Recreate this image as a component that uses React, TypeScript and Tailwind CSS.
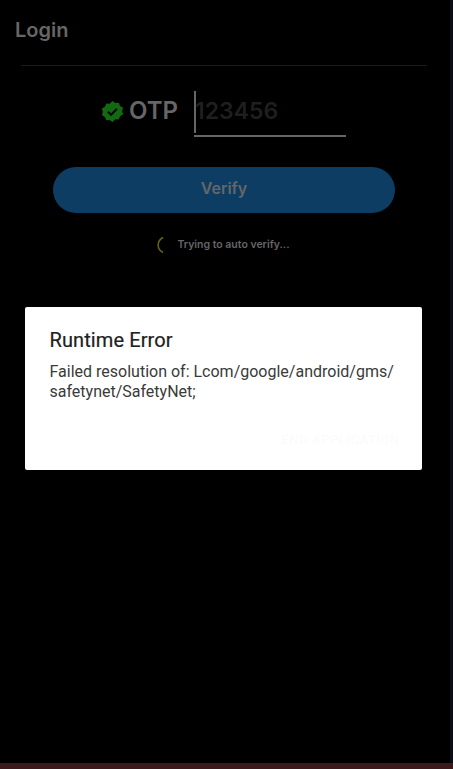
const inter = { fontFamily: '"Inter", sans-serif' };

function VerifiedBadge() {
  return (
    <svg width="23" height="23" viewBox="0 0 24 24" className="shrink-0">
      <path
        fill="#136912"
        d="M12 1l2.9 2.2 3.6-.4 1.4 3.4 3.1 1.9-.9 3.5.9 3.5-3.1 1.9-1.4 3.4-3.6-.4L12 23l-2.9-2.2-3.6.4-1.4-3.4-3.1-1.9.9-3.5-.9-3.5 3.1-1.9 1.4-3.4 3.6.4z"
      />
      <path d="M7.2 12.2l3.3 3.3 6.2-6.4" fill="none" stroke="#0a0a0a" strokeWidth="2.2" />
    </svg>
  );
}

export default function App() {
  return (
    <div className="relative flex h-[769px] w-[453px] flex-col overflow-hidden bg-black">
      <div className="flex flex-1 min-h-0">
        <main className="flex-1 min-w-0">
          <h1 className="pl-[15px] pt-[17px] text-[20px] font-semibold leading-[26px] text-[#666666]" style={inter}>
            Login
          </h1>
          <div className="ml-[21px] mr-[23px] mt-[22px] h-px bg-[#1a1a1a]" />

          {/* OTP row */}
          <div className="mt-[25px] flex items-start pl-[101px]">
            <div className="mt-[8px] flex items-center gap-[5px]">
              <VerifiedBadge />
              <span className="text-[24px] font-semibold leading-[24px] text-[#666666]" style={inter}>
                OTP
              </span>
            </div>
            <div className="ml-[16px] flex h-[46px] w-[152px] items-center border-b-2 border-[#666666] pb-[3px]">
              <div className="h-[42px] w-[2px] bg-[#666666]" />
              <span className="-ml-[1px] text-[23px] font-semibold leading-none text-[#1f1f1f]" style={inter}>
                123456
              </span>
            </div>
          </div>

          <button className="mx-[53px] mt-[30px] flex h-[46px] w-[342px] items-center justify-center rounded-[23px] bg-[#0d3d63] pb-[5px] text-[16px] font-semibold text-[#666666]" style={inter}>
            Verify
          </button>

          <div className="mt-[23px] flex items-center justify-center gap-[11px] pr-[4px]">
            <svg width="10" height="18" viewBox="0 0 10 18" className="shrink-0">
              <path d="M7 1.500 C0.500 5 0.500 13 7 16.500" fill="none" stroke="#6b6614" strokeWidth="1.500" />
            </svg>
            <span className="text-[10.500px] font-semibold leading-[14px] text-[#666666]" style={inter}>
              Trying to auto verify...
            </span>
          </div>
        </main>
        <div className="w-[3px] bg-[#0d0d18]" />
      </div>
      <div className="h-[6px] bg-[#3c1a1c]" />

      {/* dialog sits over the dimmed page */}
      <div className="absolute left-[25px] top-[307px] h-[163px] w-[397px] rounded-[2px] bg-white pl-[24.500px] pt-[20px]" style={{ fontFamily: '"Roboto", sans-serif' }}>
        <h2 className="text-[20px] leading-[26px] tracking-[0.1px] text-[#212121] [-webkit-text-stroke:0.2px_#212121]">Runtime Error</h2>
        <p className="mt-[9px] w-[350px] text-[16px] leading-[20px] text-[#3a3a3a]">
          Failed resolution of: Lcom/google/android/gms/ safetynet/SafetyNet;
        </p>
        <div className="absolute right-[22px] top-[126px] text-[13px] leading-[14px] tracking-[0.6px] text-[#fbfbfb]">
          END APPLICATION
        </div>
      </div>
    </div>
  );
}
